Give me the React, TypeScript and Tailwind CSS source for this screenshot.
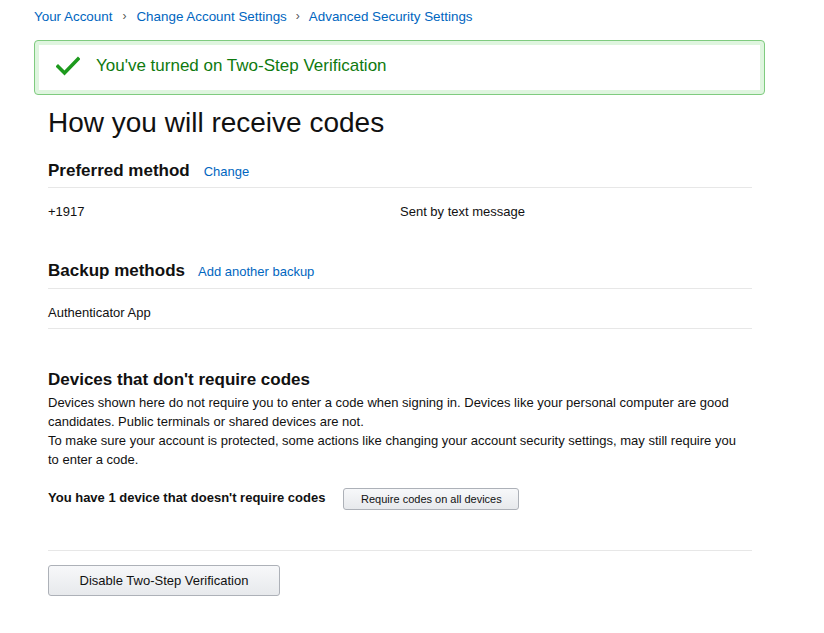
import React from 'react';

const link = 'text-[#0066c0] hover:underline cursor-pointer';

function Check() {
  return (
    <svg width="24" height="20" viewBox="0 0 24 20" className="shrink-0">
      <path d="M2 10.5 L8.5 17 L22 3" fill="none" stroke="#1d9a1d" strokeWidth="3.6" strokeLinecap="square" />
    </svg>
  );
}

export default function App() {
  return (
    <div className="min-h-[633px] bg-white text-[#111] font-['Liberation_Sans',Arial,sans-serif]">
      <div className="w-[731px] ml-[34px] pt-[8px]">
        {/* breadcrumb */}
        <nav className="flex items-center text-[13.4px] leading-[17px]">
          <span className={link}>Your Account</span>
          <span className="mx-[10px] text-[#555] text-[12px]">›</span>
          <span className={link}>Change Account Settings</span>
          <span className="mx-[9px] text-[#555] text-[12px]">›</span>
          <span className={link}>Advanced Security Settings</span>
        </nav>

        {/* success alert */}
        <div className="mt-[15px] h-[55px] rounded-[4px] border border-[#7fcb7f] p-[4px] bg-[#dff5df]">
          <div className="h-full bg-white flex items-center pl-[17px] gap-[16px] pb-[4px]">
            <Check />
            <span className="text-[17px] text-[#0f7a0f]">You've turned on Two-Step Verification</span>
          </div>
        </div>

        <div className="ml-[14px] w-[704px]">
          <h1 className="mt-[10px] text-[28px] leading-[36px] font-normal">How you will receive codes</h1>

          {/* preferred */}
          <div className="mt-[18px] flex items-baseline gap-[14px] pb-[4px] border-b border-[#e7e7e7]">
            <h2 className="text-[17px] font-bold leading-[24px]">Preferred method</h2>
            <span className={`${link} text-[13px]`}>Change</span>
          </div>
          <div className="flex text-[13px] leading-[17px] pt-[15px] h-[63px]">
            <span className="w-[352px]">+1917</span>
            <span>Sent by text message</span>
          </div>

          {/* backup */}
          <div className="mt-[8px] flex items-baseline gap-[13px] pb-[5px] border-b border-[#e7e7e7]">
            <h2 className="text-[17px] font-bold leading-[24px]">Backup methods</h2>
            <span className={`${link} text-[13px]`}>Add another backup</span>
          </div>
          <div className="text-[13px] leading-[17px] pt-[15px] pb-[7px] border-b border-[#e7e7e7]">Authenticator App</div>

          {/* devices */}
          <h2 className="mt-[39px] text-[17px] font-bold leading-[24px]">Devices that don't require codes</h2>
          <p className="w-[700px] text-[13px] leading-[19px] mt-[1px]">
            Devices shown here do not require you to enter a code when signing in. Devices like your personal computer are good candidates. Public terminals or shared devices are not.
            <br />
            To make sure your account is protected, some actions like changing your account security settings, may still require you to enter a code.
          </p>
          <div className="mt-[19px] flex items-start gap-[18px] pb-[40px] border-b border-[#e7e7e7]">
            <span className="text-[13px] font-bold leading-[19px]">You have 1 device that doesn't require codes</span>
            <button className="h-[22px] w-[176px] rounded-[3px] border border-[#adb1b8] bg-gradient-to-b from-[#f7f8fa] to-[#e7e9ec] text-[11px] text-[#111]">
              Require codes on all devices
            </button>
          </div>

          <button className="mt-[14px] h-[31px] w-[232px] rounded-[3px] border border-[#adb1b8] bg-gradient-to-b from-[#f7f8fa] to-[#e7e9ec] text-[13px] text-[#111]">
            Disable Two-Step Verification
          </button>
        </div>
      </div>
    </div>
  );
}
